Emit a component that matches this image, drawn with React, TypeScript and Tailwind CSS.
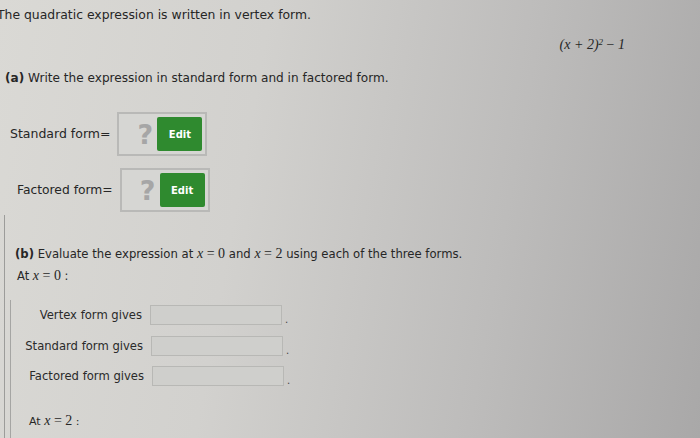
import React from "react";

const sans = { fontFamily: '"DejaVu Sans", Verdana, sans-serif' } as React.CSSProperties;
const serif = { fontFamily: '"Liberation Serif", "Times New Roman", serif' } as React.CSSProperties;

function Mx({ children }: { children: React.ReactNode }) {
  return <span className="text-[14px]" style={serif}>{children}</span>;
}

function EditBox() {
  return (
    <div className="flex h-[44px] w-[90px] items-center border-2 border-[#b9b9b7] bg-[#d6d6d3] pl-[18px] pr-[3px]">
      <span className="w-[14px] text-[27px] font-bold leading-none text-[#a6a6a6]" style={sans}>?</span>
      <div className="ml-auto flex h-[34px] w-[45px] items-center justify-center rounded-[2px] bg-[#2f8a2f] text-[10px] font-bold text-white" style={sans}>
        Edit
      </div>
    </div>
  );
}

function GiveRow({ label, w }: { label: string; w: string }) {
  return (
    <div className="flex h-[20px] items-center">
      <div className={`${w} shrink-0 whitespace-nowrap pr-[8px] text-right text-[11.6px] leading-[18px] text-[#2a2a2a]`} style={sans}>{label}</div>
      <div className="h-[20px] w-[132px] border border-[#b8b8b5] bg-[#cfcfcc]" />
      <span className="ml-[3px] flex h-[20px] items-end pb-[0px] text-[10px] leading-none text-[#444]">.</span>
    </div>
  );
}

export default function App() {
  return (
    <div
      className="relative h-[438px] w-[700px] overflow-hidden text-[#262626]"
      style={{ ...sans, background: "linear-gradient(100deg, #dad9d5 0%, #d2d1ce 35%, #bdbcbb 70%, #a9a8a8 100%)" }}
    >
      <div className="absolute left-[4px] top-[215px] h-[223px] w-[1px] bg-[#9c9c9a]" />
      <div className="absolute left-[10px] top-[300px] h-[138px] w-[1px] bg-[#a5a5a3]" />
      <div className="pt-[6px]">
        <div className="ml-[-3px] whitespace-nowrap text-[12.4px] leading-[18px]">The quadratic expression is written in vertex form.</div>
        <div className="mt-[12px] flex justify-end pr-[75px]">
          <span className="text-[14px] italic leading-[18px]" style={serif}>
            (x + 2)<sup className="text-[9px]">2</sup> <span className="not-italic">−</span> 1
          </span>
        </div>
        <div className="mt-[15px] ml-[5px] whitespace-nowrap text-[12.1px] leading-[18px]">
          <b>(a)</b> Write the expression in standard form and in factored form.
        </div>
        <div className="mt-[25px] ml-[10px] flex items-center gap-[7px]">
          <span className="whitespace-nowrap text-[12.5px]">Standard form=</span>
          <EditBox />
        </div>
        <div className="mt-[12px] ml-[17px] flex items-center gap-[7px]">
          <span className="whitespace-nowrap text-[12.3px]">Factored form=</span>
          <EditBox />
        </div>
        <div className="mt-[33px] ml-[15px] whitespace-nowrap text-[11.65px] leading-[18px]">
          <b>(b)</b> Evaluate the expression at <Mx><i>x</i> = 0</Mx> and <Mx><i>x</i> = 2</Mx> using each of the three forms.
        </div>
        <div className="mt-[4px] ml-[17px] text-[11.5px] leading-[18px]">
          At <Mx><i>x</i> = 0</Mx> :
        </div>
        <div className="mt-[20px] flex flex-col gap-[10.5px]">
          <GiveRow label="Vertex form gives" w="w-[150px]" />
          <GiveRow label="Standard form gives" w="w-[151px]" />
          <GiveRow label="Factored form gives" w="w-[152px]" />
        </div>
        <div className="mt-[26px] ml-[29px] text-[11px] leading-[18px]">
          At <Mx><i>x</i> = 2</Mx> :
        </div>
      </div>
    </div>
  );
}
